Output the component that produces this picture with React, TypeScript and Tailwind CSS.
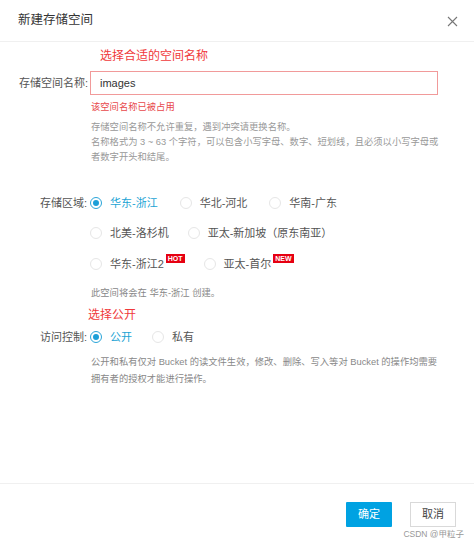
import React, { useState } from 'react';

const FONT = '"Liberation Sans", "Noto Sans CJK SC", sans-serif';

interface RadioProps {
  label: string;
  checked: boolean;
  onSelect: () => void;
  badge?: 'HOT' | 'NEW';
  className?: string;
}

const Radio: React.FC<RadioProps> = ({ label, checked, onSelect, badge, className }) => (
  <button type="button" onClick={onSelect} className={`flex items-center h-[20px] ${className || ''}`}>
    <span
      className={`w-[12px] h-[12px] rounded-full border flex items-center justify-center shrink-0 ${
        checked ? 'border-[#2aa5d9]' : 'border-[#e6e6e6]'
      }`}
    >
      {checked && <span className="w-[6px] h-[6px] rounded-full bg-[#1b9fd8]" />}
    </span>
    <span className={`ml-[8px] text-[11px] leading-[20px] ${checked ? 'text-[#1ba3d4]' : 'text-[#555]'}`}>{label}</span>
    {badge && (
      <span className="relative -top-[6px] ml-[2px] h-[9px] px-[2px] bg-[#e60012] text-white text-[7px] leading-[9px] font-bold">
        {badge}
      </span>
    )}
  </button>
);

export default function App() {
  const [name, setName] = useState('images');
  const [region, setRegion] = useState('华东-浙江');
  const [acl, setAcl] = useState('public');

  return (
    <div className="relative w-[474px] h-[544px] bg-white flex flex-col" style={{ fontFamily: FONT }}>
      {/* Header */}
      <div className="h-[42px] shrink-0 flex items-center justify-between pl-[18px] pr-[16px] border-b border-[#f0f0f0]">
        <span className="text-[12.5px] text-[#333]">新建存储空间</span>
        <svg width="11" height="11" viewBox="0 0 11 11" className="mt-[2px]">
          <path d="M1 1l9 9M10 1l-9 9" stroke="#777" strokeWidth="1.1" fill="none" />
        </svg>
      </div>

      {/* Body */}
      <div className="flex-1 flex flex-col">
        <div className="mt-[6px] ml-[100px] h-[16px] leading-[16px] text-[12px] text-[#f0393b]">选择合适的空间名称</div>

        <div className="mt-[7px] flex items-center">
          <label className="w-[90px] pr-[2px] text-right text-[11px] text-[#555]">存储空间名称:</label>
          <input
            value={name}
            onChange={(e) => setName(e.target.value)}
            className="w-[348px] h-[24px] px-[9px] border border-[#f19a9a] text-[11px] text-[#333] outline-none"
          />
        </div>

        <div className="mt-[5px] ml-[91px] h-[14px] leading-[14px] text-[9.3px] text-[#e8484b]">该空间名称已被占用</div>

        <div className="mt-[6px] ml-[91px] w-[350px] text-[9.3px] leading-[15px] text-[#999]">
          <p>存储空间名称不允许重复，遇到冲突请更换名称。</p>
          <p>名称格式为 3 ~ 63 个字符，可以包含小写字母、数字、短划线，且必须以小写字母或者数字开头和结尾。</p>
        </div>

        {/* Region */}
        <div className="mt-[28px] flex">
          <label className="w-[90px] pr-[3px] text-right text-[11px] leading-[20px] text-[#555]">存储区域:</label>
          <div className="flex flex-col">
            <div className="flex">
              <Radio label="华东-浙江" checked={region === '华东-浙江'} onSelect={() => setRegion('华东-浙江')} />
              <Radio className="ml-[22px]" label="华北-河北" checked={region === '华北-河北'} onSelect={() => setRegion('华北-河北')} />
              <Radio className="ml-[22px]" label="华南-广东" checked={region === '华南-广东'} onSelect={() => setRegion('华南-广东')} />
            </div>
            <div className="mt-[10px] flex">
              <Radio label="北美-洛杉机" checked={region === '北美-洛杉机'} onSelect={() => setRegion('北美-洛杉机')} />
              <Radio className="ml-[19px]" label="亚太-新加坡（原东南亚）" checked={region === '亚太-新加坡（原东南亚）'} onSelect={() => setRegion('亚太-新加坡（原东南亚）')} />
            </div>
            <div className="mt-[11px] flex">
              <Radio label="华东-浙江2" badge="HOT" checked={region === '华东-浙江2'} onSelect={() => setRegion('华东-浙江2')} />
              <Radio className="ml-[19px]" label="亚太-首尔" badge="NEW" checked={region === '亚太-首尔'} onSelect={() => setRegion('亚太-首尔')} />
            </div>
          </div>
        </div>

        <div className="mt-[12px] ml-[91px] h-[14px] leading-[14px] text-[9.3px] text-[#888]">此空间将会在 {region} 创建。</div>

        <div className="mt-[7px] ml-[88px] h-[16px] leading-[16px] text-[12px] text-[#f0393b]">选择公开</div>

        {/* Access */}
        <div className="mt-[4px] flex">
          <label className="w-[90px] pr-[3px] text-right text-[11px] leading-[20px] text-[#555]">访问控制:</label>
          <Radio label="公开" checked={acl === 'public'} onSelect={() => setAcl('public')} />
          <Radio className="ml-[20px]" label="私有" checked={acl === 'private'} onSelect={() => setAcl('private')} />
        </div>

        <div className="mt-[7px] ml-[91px] w-[350px] text-[9.3px] leading-[17px] text-[#888]">
          公开和私有仅对 Bucket 的读文件生效，修改、删除、写入等对 Bucket 的操作均需要拥有者的授权才能进行操作。
        </div>
      </div>

      {/* Footer */}
      <div className="h-[61px] shrink-0 border-t border-[#f0f0f0] flex justify-end items-start pt-[18px] pr-[18px] gap-[18px]">
        <button className="w-[46px] h-[25px] bg-[#00a2e2] text-white text-[11px] rounded-[1px]">确定</button>
        <button className="w-[46px] h-[25px] bg-white border border-[#d9d9d9] text-[#444] text-[11px]">取消</button>
      </div>

      <span className="absolute right-[10px] bottom-[3px] text-[8.5px] text-[#999]">CSDN @甲粒子</span>
    </div>
  );
}
